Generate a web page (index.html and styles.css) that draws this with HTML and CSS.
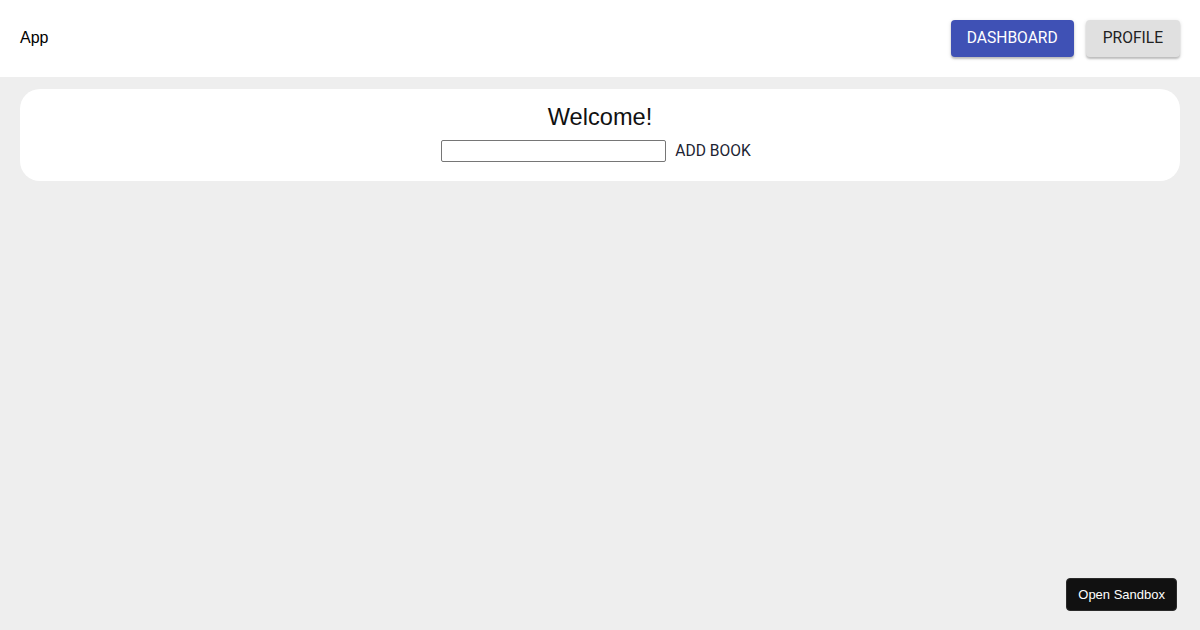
FILE: index.html
```html
<!DOCTYPE html>
<html lang="en">
<head>
  <meta charset="UTF-8" />
  <meta name="viewport" content="width=device-width, initial-scale=1.0"/>
  <title>App</title>
  <link rel="stylesheet" href="styles.css">
</head>
<body>
  <header class="topbar">
    <div class="brand">App</div>
    <nav class="nav">
      <button class="btn btn-primary">Dashboard</button>
      <button class="btn btn-default">Profile</button>
    </nav>
  </header>

  <main class="content">
    <section class="card">
      <h2 class="welcome">Welcome!</h2>
      <div class="add-row">
        <input type="text" class="book-input" />
        <button class="text-btn">Add Book</button>
      </div>
    </section>
  </main>

  <button class="sandbox-btn">Open Sandbox</button>
</body>
</html>
```

FILE: styles.css
```css
body {
  margin: 0;
  padding: 0;
  background: #eeeeee;
  font-family: "Liberation Sans", Arial, sans-serif;
  color: #111;
  height: 630px;
  overflow: hidden;
}

.topbar {
  background: #fff;
  height: 77px;
  display: flex;
  align-items: center;
  justify-content: space-between;
  padding: 0 20px;
  box-sizing: border-box;
}

.brand {
  font-size: 16px;
  color: #000;
  padding-bottom: 2px;
}

.nav {
  display: flex;
  gap: 12px;
  padding-bottom: 1px;
}

.btn {
  font-family: Roboto, sans-serif;
  font-size: 15.6px;
  text-transform: uppercase;
  height: 37px;
  padding: 0 16px;
  border: none;
  border-radius: 4px;
  cursor: pointer;
  box-shadow: 0 2px 2px rgba(0,0,0,0.2), 0 1px 4px rgba(0,0,0,0.12);
}

.btn-primary {
  background: #3f51b5;
  color: #fff;
}

.btn-default {
  background: #e0e0e0;
  color: #222;
  padding: 0 17px;
}

.content {
  padding: 12px 20px;
}

.card {
  background: #fff;
  border-radius: 20px;
  padding: 14px 0 19px;
  display: flex;
  flex-direction: column;
  align-items: center;
}

.welcome {
  margin: 0;
  font-size: 23.6px;
  font-weight: 400;
  line-height: 28px;
}

.add-row {
  display: flex;
  align-items: center;
  gap: 9px;
  margin-top: 9px;
}

.book-input {
  width: 225px;
  height: 22px;
  box-sizing: border-box;
  border: 1px solid #767676;
  border-radius: 2px;
  padding: 0 4px;
}

.text-btn {
  font-family: Roboto, sans-serif;
  font-size: 15.6px;
  text-transform: uppercase;
  background: none;
  border: none;
  padding: 0 8px 0 0;
  color: #1c2433;
  cursor: pointer;
}

.sandbox-btn {
  position: fixed;
  right: 23px;
  bottom: 19px;
  height: 33px;
  padding: 0 11px;
  background: #111;
  color: #fff;
  border: 1px solid #2a2a2a;
  border-radius: 4px;
  font-family: "Liberation Sans", Arial, sans-serif;
  font-size: 13px;
}
```
